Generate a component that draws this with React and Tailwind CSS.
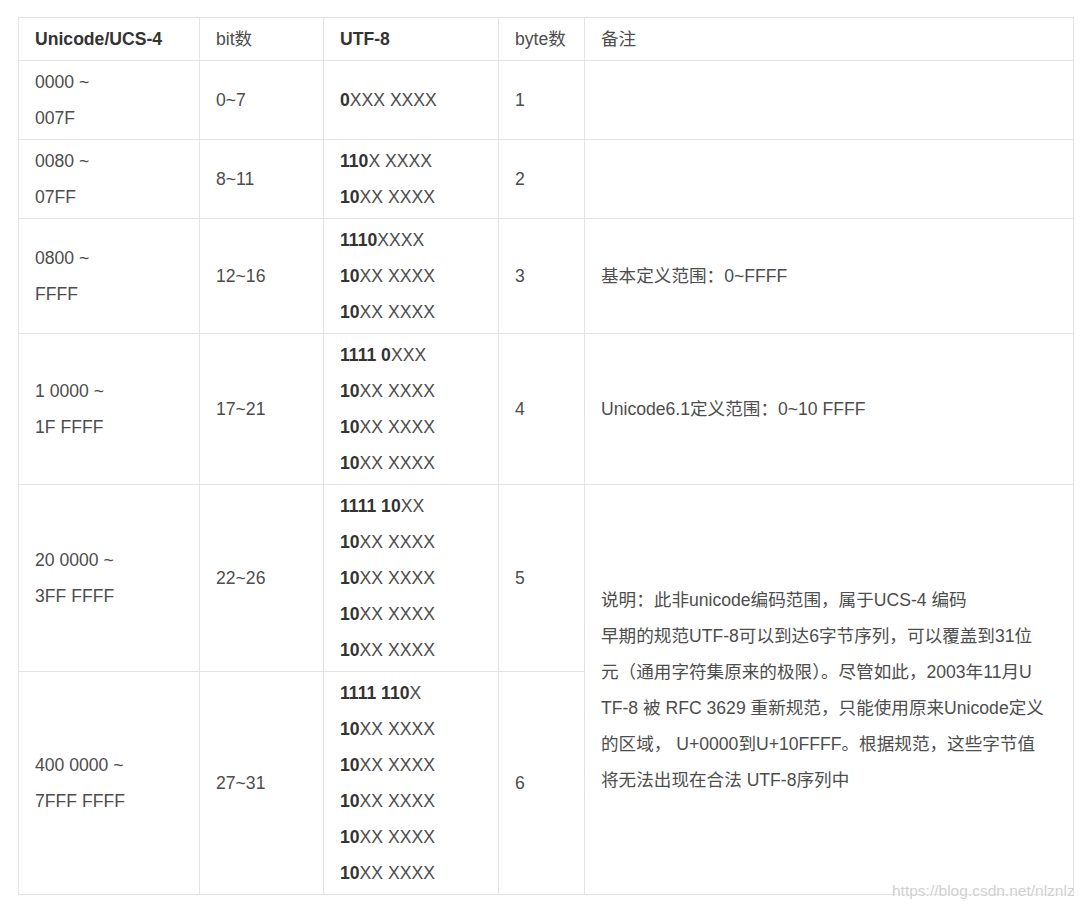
import React from "react";

const font = { fontFamily: '"Liberation Sans", Arial, "Noto Sans CJK SC", sans-serif' };

function U({ b, r }) {
  return (
    <div>
      <b className="font-bold text-[#333]">{b}</b>
      {r}
    </div>
  );
}

const td = "border border-[#e3e3e3] px-4 py-[3px] align-middle";

export default function App() {
  return (
    <div className="relative min-h-[911px] overflow-hidden bg-white text-[17.6px] leading-[36px] text-[#4d4d4d]" style={font}>
      <div className="pl-[18px] pt-[17px]">
        <table className="w-[1055px] table-fixed border-collapse">
          <colgroup>
            <col className="w-[181px]" />
            <col className="w-[124px]" />
            <col className="w-[175px]" />
            <col className="w-[86px]" />
            <col className="w-[489px]" />
          </colgroup>
          <thead>
            <tr className="text-left">
              <th className={td + " font-bold text-[#333]"}>Unicode/UCS-4</th>
              <th className={td + " font-normal"}>bit数</th>
              <th className={td + " font-bold text-[#333]"}>UTF-8</th>
              <th className={td + " font-normal"}>byte数</th>
              <th className={td + " font-normal"}>备注</th>
            </tr>
          </thead>
          <tbody>
            <tr>
              <td className={td}>0000 ~<br />007F</td>
              <td className={td}>0~7</td>
              <td className={td}><U b="0" r="XXX XXXX" /></td>
              <td className={td}>1</td>
              <td className={td}></td>
            </tr>
            <tr>
              <td className={td}>0080 ~<br />07FF</td>
              <td className={td}>8~11</td>
              <td className={td}>
                <U b="110" r="X XXXX" />
                <U b="10" r="XX XXXX" />
              </td>
              <td className={td}>2</td>
              <td className={td}></td>
            </tr>
            <tr>
              <td className={td}>0800 ~<br />FFFF</td>
              <td className={td}>12~16</td>
              <td className={td}>
                <U b="1110" r="XXXX" />
                <U b="10" r="XX XXXX" />
                <U b="10" r="XX XXXX" />
              </td>
              <td className={td}>3</td>
              <td className={td}>基本定义范围：0~FFFF</td>
            </tr>
            <tr>
              <td className={td}>1 0000 ~<br />1F FFFF</td>
              <td className={td}>17~21</td>
              <td className={td}>
                <U b="1111 0" r="XXX" />
                <U b="10" r="XX XXXX" />
                <U b="10" r="XX XXXX" />
                <U b="10" r="XX XXXX" />
              </td>
              <td className={td}>4</td>
              <td className={td}>Unicode6.1定义范围：0~10 FFFF</td>
            </tr>
            <tr>
              <td className={td}>20 0000 ~<br />3FF FFFF</td>
              <td className={td}>22~26</td>
              <td className={td}>
                <U b="1111 10" r="XX" />
                <U b="10" r="XX XXXX" />
                <U b="10" r="XX XXXX" />
                <U b="10" r="XX XXXX" />
                <U b="10" r="XX XXXX" />
              </td>
              <td className={td}>5</td>
              <td className={td + " whitespace-nowrap"} rowSpan={2}>
                说明：此非unicode编码范围，属于UCS-4 编码<br />
                早期的规范UTF-8可以到达6字节序列，可以覆盖到31位<br />
                元（通用字符集原来的极限）。尽管如此，2003年11月U<br />
                TF-8 被 RFC 3629 重新规范，只能使用原来Unicode定义<br />
                的区域， U+0000到U+10FFFF。根据规范，这些字节值<br />
                将无法出现在合法 UTF-8序列中
              </td>
            </tr>
            <tr>
              <td className={td}>400 0000 ~<br />7FFF FFFF</td>
              <td className={td}>27~31</td>
              <td className={td}>
                <U b="1111 110" r="X" />
                <U b="10" r="XX XXXX" />
                <U b="10" r="XX XXXX" />
                <U b="10" r="XX XXXX" />
                <U b="10" r="XX XXXX" />
                <U b="10" r="XX XXXX" />
              </td>
              <td className={td}>6</td>
            </tr>
          </tbody>
        </table>
        <p className="mt-[13px] whitespace-nowrap pl-[47px] leading-[26px]">
          由上表可以看出，UTF-8 编码的字节中第一个字节的前导位决定了后续字节的个数，其余字节都以 10 开头。
        </p>
      </div>
      <span className="absolute left-[892px] top-[881px] text-[15.5px] leading-[20px] text-[#d0d0d0] [text-shadow:0_0_2px_#fff,0_0_2px_#fff]">
        https://blog.csdn.net/nlznlz
      </span>
    </div>
  );
}
